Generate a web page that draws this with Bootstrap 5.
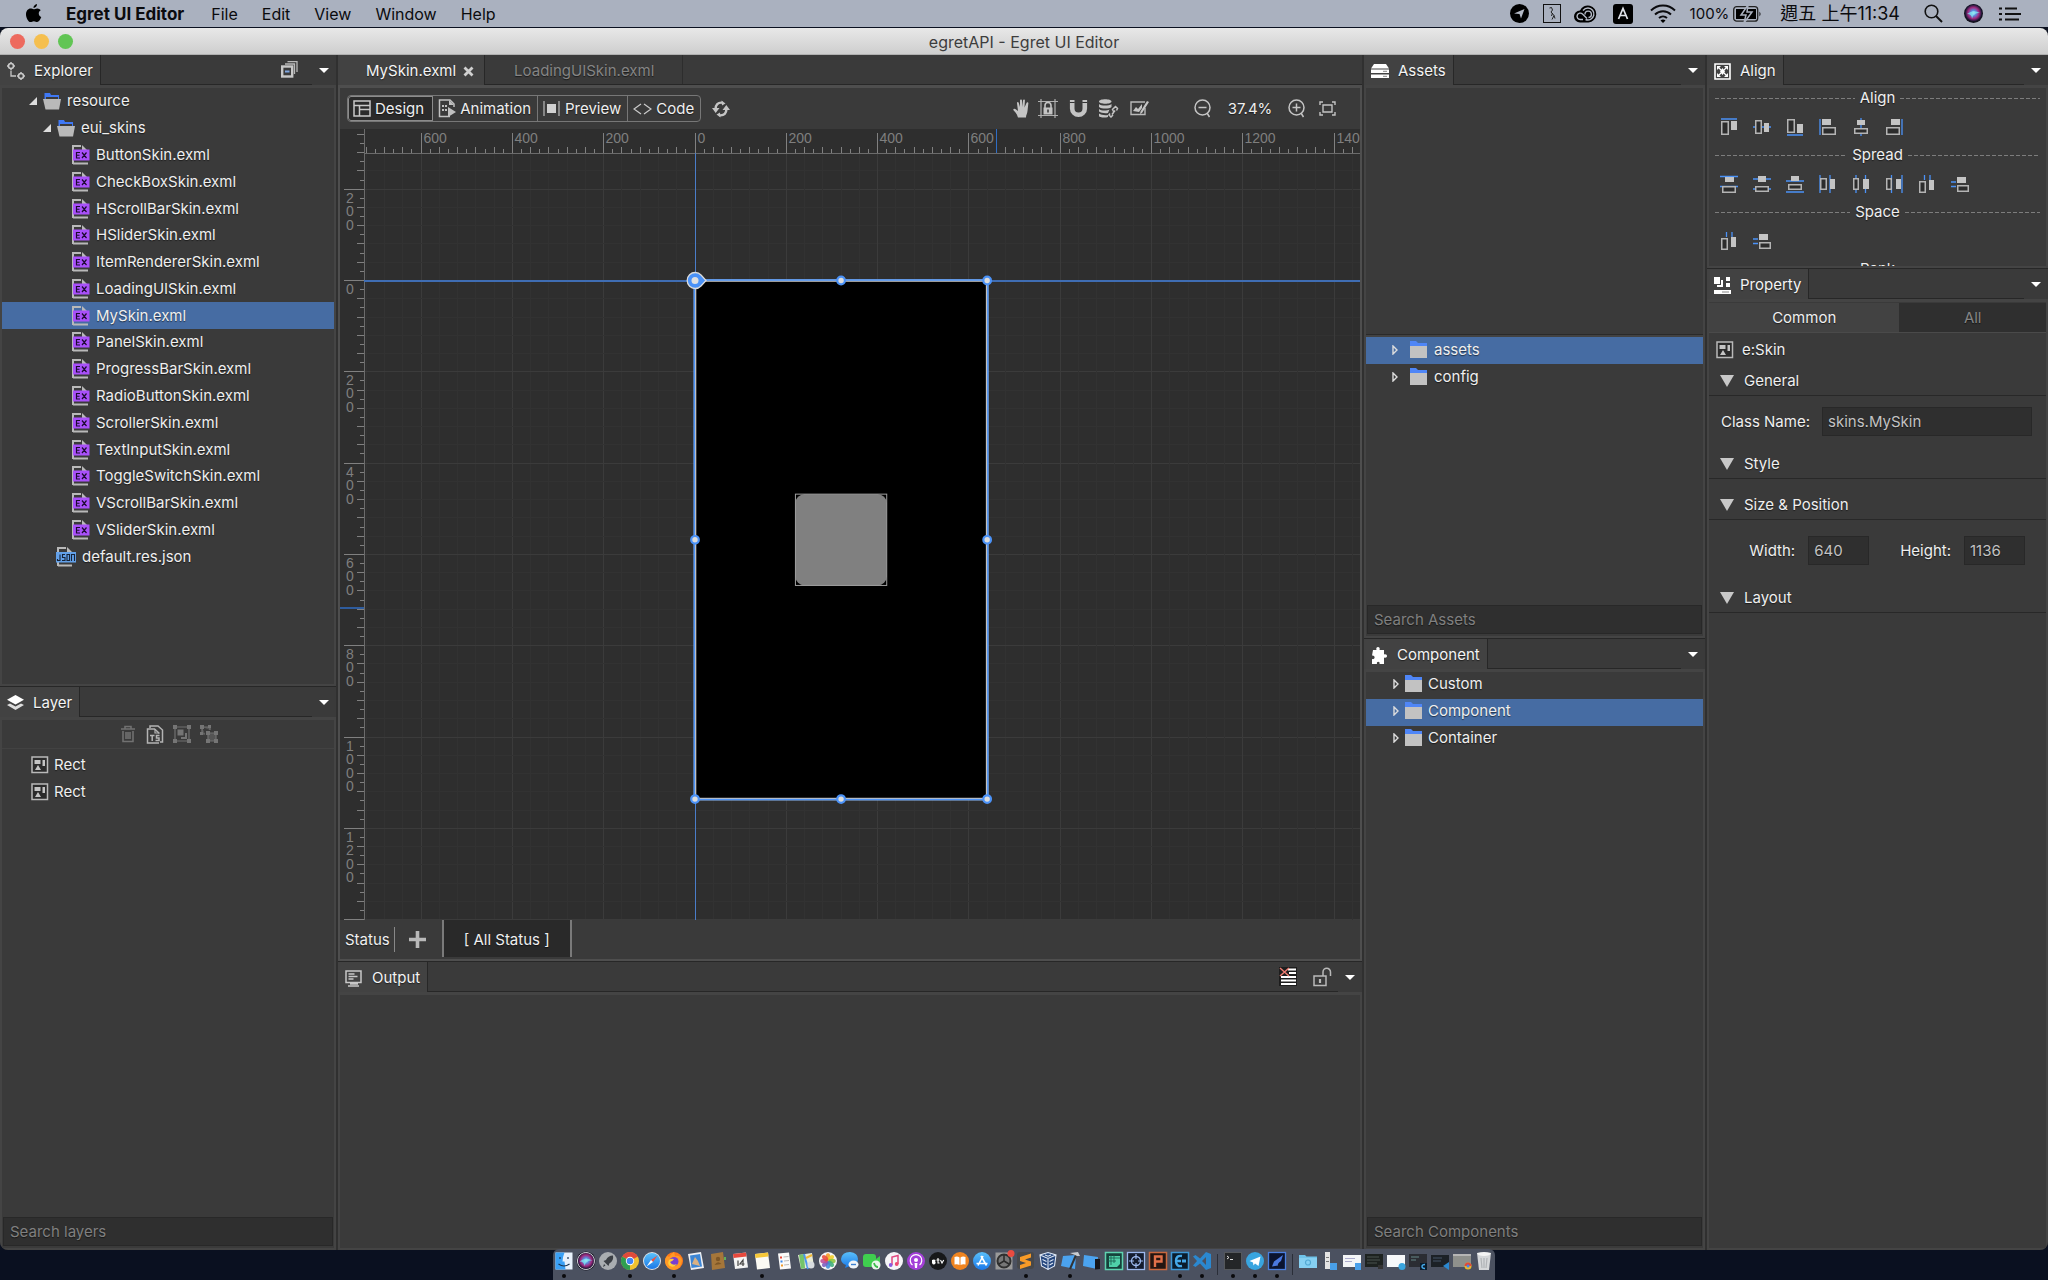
<!DOCTYPE html>
<html lang="en">
<head>
<meta charset="utf-8">
<meta name="viewport" content="width=device-width, initial-scale=1">
<title>egretAPI - Egret UI Editor</title>
<link href="https://cdn.jsdelivr.net/npm/bootstrap@5.3.0/dist/css/bootstrap.min.css" rel="stylesheet">
<script src="https://cdn.jsdelivr.net/npm/bootstrap@5.3.0/dist/js/bootstrap.bundle.min.js"></script>
<style>
  :root { --bg:#3a3a3a; --edge:#444444; --dark:#272727; --field:#2f2f2f; --sel:#466ca3; --ink:#efefef; --icon:#c4c4c4; --blue:#4b92f7; }
  body { font-family: Inter, "Noto Sans CJK TC", sans-serif; font-size:15px; line-height:20px; color:var(--ink); background:#0a1020; overflow:hidden; }
  svg { display:block; flex:none; }
  a { color:inherit; text-decoration:none; }
  button { color:inherit; }
  .menubar { height:27px; background:#aab1bf; color:#0b0b0e; font-size:16px; padding:0 27px 0 25px; margin-bottom:1px; }
  .menubar .appname { font-size:17px; font-weight:700; padding-right:3px; }
  .menubar .clock { font-size:18px; margin-left:18px; }
  .menubar .pct { font-size:15px; }
  .win { margin-bottom:30px; border-radius:8px; overflow:hidden; background:var(--dark); min-height:0; }
  .titlebar { height:27px; padding-top:2px; background:linear-gradient(#e8e8e8,#cecece); border-bottom:1px solid #b0b0b0; color:#3d3d3d; font-size:16px; }
  .lights { gap:9px; left:10px; top:6px; }
  .lights button { width:15px; height:15px; border-radius:50%; border:0; padding:0; }
  .work { display:grid; grid-template-columns:338px minmax(0,1fr) 343px 341px; text-shadow:0 1px 1px rgba(0,0,0,.55); min-height:0; }
  .pane { background:var(--edge); padding:0 2px 2px; min-height:0; border-bottom:1px solid var(--dark); }
  .colm { border-right:2px solid #303030; min-height:0; }
  .colm:last-child { border-right:0; }
  .colm > :last-child { border-bottom:0; }
  .bright { background:#4e4e4e; }
  .phead { height:30px; margin:0 -2px 3px; background:var(--bg); flex:none; }
  .ptab { background:#424242; border:0; padding:2px 7px 0 7px; gap:9px; color:#f4f4f4; text-shadow:inherit; }
  .pfill { border-left:1px solid var(--dark); border-bottom:1px solid var(--dark); }
  .ibtn { border:0; background:none; padding:0; display:flex; align-items:center; justify-content:center; color:var(--icon); text-shadow:inherit; }
  .more { width:24px; padding-top:2px; }
  .pbody { background:var(--bg); min-height:0; }
  .trow { height:27px; white-space:nowrap; }
  .trow.on, .flexrow.on { background:var(--sel); }
  .asset { padding-left:26px; gap:12px; } .asset span { margin-left:-6px; }
  .comprow { padding:0 0 2px 26px; gap:5px; }
  .layerrow { padding-left:29px; gap:5px; }
  .explist { height:482px; }
  .flexrow { flex:1 1 0; white-space:nowrap; min-height:0; }
  .lv0 { padding-left:27px; gap:6px; } .lv1 { padding-left:41px; gap:6px; } .lv2 { padding-left:70px; gap:6px; } .lvj { padding-left:54px; gap:6px; }
  .field { background:var(--field); border:1px solid #282828; color:#c3c3c3; height:29px; padding:0 5px; border-radius:0; font-size:15px; outline:0; min-width:0; text-shadow:inherit; }
  .field::placeholder { color:#808080; opacity:1; }
  .find { margin:0 1px 2px; padding:0 6px; }
  .seg { border:1px solid #777; border-radius:4px; height:27px; }
  .seg button { border:0; border-right:1px solid #777; background:none; gap:4px; padding:0 6px 0 5px; text-shadow:inherit; }
  .seg button:last-child { border-right:0; }
  .seg .active { background:#2a2a2a; outline:1px solid #8c8c8c; outline-offset:-1px; border-radius:3px 0 0 3px; padding-right:8px; }
  .etool { height:41px; padding:0 7px; }
  .tools { gap:11px; padding-right:17px; }
  .doc { border:0; background:none; color:#858585; text-shadow:inherit; padding:2px 28px 0 29px; border-right:1px solid #2d2d2d; }
  .doc.active { background:#424242; color:#f4f4f4; padding:2px 10px 0 28px; gap:7px; border-right:0; }
  .stage { background:#2e2e2e; min-height:0; }
  .stage text { font:14px "Liberation Sans", sans-serif; fill:#7f7f7f; text-shadow:none; }
  .vline { width:1px; height:25px; background:#888; }
  .state { background:#292929; border:0; border-left:2px solid #7a7a7a; border-right:2px solid #7a7a7a; padding:2px 20px 0; color:var(--ink); text-shadow:inherit; }
  .lgd { height:18px; padding:0 6px; gap:5px; }
  .lgd::before, .lgd::after { content:""; flex:1; height:1px; background:repeating-linear-gradient(90deg,#7d7d7d 0 4px,transparent 4px 6px); }
  .icons { height:39px; gap:15px; padding-left:11px; }
  .sect { height:29px; border-bottom:1px solid #282828; padding-left:11px; gap:10px; border-top:0; border-left:0; border-right:0; background:none; text-shadow:inherit; width:100%; }
  .half { border:0; height:29px; text-shadow:inherit; }
  .clsrow { padding:11px 14px 14px 12px; }
  .clsrow label { flex:0 0 101px; white-space:nowrap; }
  .sizerow { padding:16px 21px 19px 0; gap:13px; }
  .num { width:61px; }
  .dock { height:31px; background:#4b5160; border-radius:6px 6px 0 0; bottom:0; left:50%; transform:translateX(-50%); }
  .dock a { width:22px; padding:3px 2px 0; position:relative; }
  .dock .run::after { content:""; position:absolute; left:9px; top:25px; width:4px; height:4px; border-radius:50%; background:#0a0a0c; }
  .dock i { width:9px; padding:5px 4px; } .dock i::before { content:""; display:block; height:21px; background:#2a2e38; }
</style>
</head>
<body class="vh-100 d-flex flex-column position-relative">

<svg width="0" height="0" class="position-absolute" aria-hidden="true">
  <defs>
    <linearGradient id="gb" x2="0" y2="1"><stop stop-color="#5ac0fb"/><stop offset="1" stop-color="#1a78e8"/></linearGradient>
    <radialGradient id="gs"><stop stop-color="#e8f4ff"/><stop offset=".3" stop-color="#5a8fe0"/><stop offset=".65" stop-color="#a02a80"/><stop offset="1" stop-color="#101430"/></radialGradient>
    <g id="siriball"><circle cx="9.500" cy="9.500" r="9.500" fill="#15131f"/><circle cx="9.500" cy="9" r="8.500" fill="url(#gs)"/><path d="M3 10q6-5 13-1-7-1-8 6 0-5-5-5z" fill="#7fe3f0" opacity=".8"/></g>
  </defs>
  <symbol id="more" viewBox="0 0 10 6"><path d="M0 0h10L5 5z" fill="#fff"/></symbol>
  <symbol id="open" viewBox="0 0 8 8"><path d="M8 0v8H0z" fill="#ddd"/></symbol>
  <symbol id="shut" viewBox="0 0 6 10"><path d="M1 1l4 4-4 4z" fill="none" stroke="#ddd" stroke-width="1.4"/></symbol>
  <symbol id="folderopen" viewBox="0 0 18 18"><path d="M1.500 1H7l1 2h8v5h-1V5H3v3H1.500z" fill="#3f78f5"/><path d="M0 7h18l-2 10.500H2.500z" fill="#b9b9b9"/></symbol>
  <symbol id="folder" viewBox="0 0 18 18"><path d="M0 0h6l2 2h9v4H0z" fill="#4f86f7"/><path d="M0 5h17v12H0z" fill="#c2c2c2"/></symbol>
  <symbol id="exml" viewBox="0 0 18 20"><path d="M1 19V1h8M16 18.500H1" fill="none" stroke="#b9b9b9" stroke-width="2"/><path d="M10 0l5 5h-5z" fill="#b9b9b9"/><rect x="1" y="4.500" width="16.500" height="11" fill="#a950fa"/><path d="M8 7.500H4.500v5.500H8M4.500 10.250h3M10 7.500l4.500 5.500M14.500 7.500L10 13" stroke="#1c0a30" stroke-width="1.200" fill="none"/></symbol>
  <symbol id="json" viewBox="0 0 20 20"><path d="M2 19V1h8M16 18.500H2" fill="none" stroke="#b9b9b9" stroke-width="2"/><path d="M11 0l5 5h-5z" fill="#b9b9b9"/><rect y="5" width="20" height="10.500" fill="#62a0e8"/><path d="M4 7.500v6H1.500v-1.500M9 7.500H6.500v3h2.500v3h-3M11 7.500h2.500v6H11zM15.500 14V7.500h3V14" stroke="#152338" stroke-width="1.100" fill="none"/></symbol>
  <symbol id="comp" viewBox="0 0 18 18"><rect x="1" y="1" width="15.500" height="15.500" fill="#2b2b2b" stroke="#b9b9b9" stroke-width="1.500"/><path d="M3.500 4h6v4h-6zM11.500 4H14v6h-2.500zM4 14l3-5 3 5z" fill="#c4c4c4"/></symbol>
  <symbol id="tri" viewBox="0 0 14 12"><path d="M0 0h14L7 12z" fill="#c8c8c8"/></symbol>
</svg>

<nav class="menubar d-flex align-items-center flex-shrink-0" aria-label="System menu">
  <a href="#" aria-label="Apple"><svg width="17" height="19" viewBox="0 0 17 19"><path d="M12 0c.2 1.900-1.700 4-3.500 3.900C8.300 2.200 10 .3 12 0zM8.700 5.200c.9 0 2-.9 3.600-.8 1.400.1 2.600.7 3.400 1.800-2.900 1.700-2.400 5.600.6 6.800-.9 2.500-2.500 5-4.100 5-1.200 0-1.700-.8-3.300-.8s-2.100.8-3.300.8C3.200 18 1 13.700 1 10.400 1 6.700 3.200 4.500 5.500 4.500c1.300 0 2.400.7 3.200.7z"/></svg></a>
  <a href="#" class="appname ms-4">Egret UI Editor</a>
  <a href="#" class="ms-4">File</a><a href="#" class="ms-4">Edit</a><a href="#" class="ms-4">View</a><a href="#" class="ms-4">Window</a><a href="#" class="ms-4">Help</a>
  <div class="ms-auto d-flex align-items-center">
    <svg width="19" height="19" viewBox="0 0 19 19"><circle cx="9.500" cy="9.500" r="9.500"/><path d="M4 9.500L14.500 5 11 14.500 9.500 10z" fill="#b4bac6"/></svg>
    <svg style="margin:0 12px 0 14px" width="18" height="19" viewBox="0 0 18 19"><rect x=".5" y=".5" width="17" height="18" fill="none" stroke="#111"/><path d="M6.500 4l2-.5 1 2.500-1.500 2 3 3.500M9.500 9l-1 3M11 11.500l-2 4M11 11.500l1 3" fill="none" stroke="#222"/></svg>
    <svg width="24" height="18" viewBox="0 0 24 18"><path d="M7 5.500a8.500 8.500 0 1 1 8.500 12H7a6 6 0 0 1 0-12z"/><path d="M14 13.500L9.500 9a3.200 3.200 0 1 0-2.300 5.500H10M10 5.500q2-2.500 5-2.500a6 6 0 1 1-2.500 11.500M12 9.500a3.200 3.200 0 1 1 3.500 3" fill="none" stroke="#b4bac6" stroke-width="1.400"/></svg>
    <svg class="ms-3" width="20" height="20" viewBox="0 0 20 20"><rect width="20" height="20" rx="3"/><path d="M5.500 15L10 4.500 14.500 15M7 11.500h6" fill="none" stroke="#dfe2e8" stroke-width="1.700"/></svg>
    <svg style="margin:0 14px 0 17px" width="26" height="20" viewBox="0 0 26 20"><g fill="none" stroke="#0b0b0e" stroke-width="1.900"><path d="M1 6.500a17 17 0 0 1 24 0M5 10.500a11.500 11.500 0 0 1 16 0M9 14a6 6 0 0 1 8 0"/></g><path d="M10.500 16.500a4 4 0 0 1 5 0L13 19z"/></svg>
    <span class="pct">100%</span>
    <svg class="ms-1" width="29" height="18" viewBox="0 0 29 18"><rect x=".7" y="1.700" width="24" height="14.500" rx="3" fill="none" stroke="#222" stroke-width="1.300"/><path d="M3 4h20v10H3zM26.500 6.500q2 2.500 0 5z"/><path d="M15 0L8 10h5l-2 8 8-11h-5z" stroke="#aab1bf" stroke-width="1.500"/></svg>
    <span class="clock">週五 上午11:34</span>
    <svg class="ms-4" width="20" height="19" viewBox="0 0 20 19"><circle cx="7.500" cy="7.500" r="6.300" fill="none" stroke="#111" stroke-width="1.600"/><path d="M12 12l6 6" stroke="#111" stroke-width="1.900"/></svg>
    <svg style="margin:0 16px 0 20px" width="19" height="19" viewBox="0 0 19 19"><use href="#siriball"/></svg>
    <svg width="22" height="14" viewBox="0 0 22 14"><path d="M0 1.500h3M0 7h3M0 12.500h3M6 1.500h12M6 7h16M6 12.500h14" stroke="#111" stroke-width="2"/></svg>
  </div>
</nav>

<main class="win flex-fill d-flex flex-column">
  <header class="titlebar position-relative d-flex align-items-center justify-content-center flex-shrink-0">
    <div class="lights position-absolute d-flex">
      <button aria-label="Close" style="background:#ed6a5e"></button><button aria-label="Minimize" style="background:#f5bf4f"></button><button aria-label="Zoom" style="background:#61c554"></button>
    </div>
    <span>egretAPI - Egret UI Editor</span>
  </header>

  <div class="work flex-fill">
    <!-- Explorer and layers -->
    <div class="colm d-flex flex-column">
      <section class="pane d-flex flex-column" style="flex:632 1 0">
        <div class="phead d-flex">
          <button class="ptab d-flex align-items-center"><svg width="18" height="18" viewBox="0 0 18 18"><g fill="none" stroke="#c8c8c8" stroke-width="1.600"><circle cx="4" cy="4" r="2.500"/><circle cx="14" cy="14" r="2.500"/><path d="M4 8.500V14h5" stroke-width="1.300"/></g><path d="M4 0v2M4 6v2M0 4h2M6 4h2M14 10v2M14 16v2M10 14h2M16 14h2" stroke="#c8c8c8" stroke-width="1.500"/></svg>Explorer</button>
          <div class="pfill flex-fill d-flex justify-content-end" style="padding-right:14px"><button class="ibtn" aria-label="Collapse all"><svg width="17" height="17" viewBox="0 0 17 17"><path d="M4 3h9.500v10M6.500 .7h9.500V11" fill="none" stroke="#b9b9b9" stroke-width="1.300"/><rect x="1.200" y="5.500" width="10" height="10" fill="none" stroke="#c8c8c8" stroke-width="2.400"/><rect x="4" y="9.500" width="4.500" height="2" fill="#7fa5e0"/></svg></button></div>
          <button class="ibtn more" aria-label="Explorer menu"><svg width="10" height="6"><use href="#more"/></svg></button>
        </div>
        <div class="pbody flex-fill overflow-hidden">
          <div class="explist d-flex flex-column">
            <div class="flexrow lv0 d-flex align-items-center"><svg width="8" height="8"><use href="#open"/></svg><svg width="18" height="18"><use href="#folderopen"/></svg>resource</div>
            <div class="flexrow lv1 d-flex align-items-center"><svg width="8" height="8"><use href="#open"/></svg><svg width="18" height="18"><use href="#folderopen"/></svg>eui_skins</div>
            <div class="flexrow lv2 d-flex align-items-center"><svg width="18" height="20"><use href="#exml"/></svg>ButtonSkin.exml</div>
            <div class="flexrow lv2 d-flex align-items-center"><svg width="18" height="20"><use href="#exml"/></svg>CheckBoxSkin.exml</div>
            <div class="flexrow lv2 d-flex align-items-center"><svg width="18" height="20"><use href="#exml"/></svg>HScrollBarSkin.exml</div>
            <div class="flexrow lv2 d-flex align-items-center"><svg width="18" height="20"><use href="#exml"/></svg>HSliderSkin.exml</div>
            <div class="flexrow lv2 d-flex align-items-center"><svg width="18" height="20"><use href="#exml"/></svg>ItemRendererSkin.exml</div>
            <div class="flexrow lv2 d-flex align-items-center"><svg width="18" height="20"><use href="#exml"/></svg>LoadingUISkin.exml</div>
            <div class="flexrow lv2 d-flex align-items-center on"><svg width="18" height="20"><use href="#exml"/></svg>MySkin.exml</div>
            <div class="flexrow lv2 d-flex align-items-center"><svg width="18" height="20"><use href="#exml"/></svg>PanelSkin.exml</div>
            <div class="flexrow lv2 d-flex align-items-center"><svg width="18" height="20"><use href="#exml"/></svg>ProgressBarSkin.exml</div>
            <div class="flexrow lv2 d-flex align-items-center"><svg width="18" height="20"><use href="#exml"/></svg>RadioButtonSkin.exml</div>
            <div class="flexrow lv2 d-flex align-items-center"><svg width="18" height="20"><use href="#exml"/></svg>ScrollerSkin.exml</div>
            <div class="flexrow lv2 d-flex align-items-center"><svg width="18" height="20"><use href="#exml"/></svg>TextInputSkin.exml</div>
            <div class="flexrow lv2 d-flex align-items-center"><svg width="18" height="20"><use href="#exml"/></svg>ToggleSwitchSkin.exml</div>
            <div class="flexrow lv2 d-flex align-items-center"><svg width="18" height="20"><use href="#exml"/></svg>VScrollBarSkin.exml</div>
            <div class="flexrow lv2 d-flex align-items-center"><svg width="18" height="20"><use href="#exml"/></svg>VSliderSkin.exml</div>
            <div class="flexrow lvj d-flex align-items-center"><svg width="20" height="20"><use href="#json"/></svg>default.res.json</div>
          </div>
        </div>
      </section>
      <section class="pane d-flex flex-column" style="flex:563 1 0">
        <div class="phead d-flex">
          <button class="ptab d-flex align-items-center"><svg width="17" height="16" viewBox="0 0 17 16"><path d="M8.500 0L17 4.700 8.500 9.400 0 4.700z" fill="#fff"/><path d="M0 10l3-1.500 5.500 3 5.500-3 3 1.500-8.500 5z" fill="#ddd"/></svg>Layer</button>
          <div class="pfill flex-fill"></div>
          <button class="ibtn more" aria-label="Layer menu"><svg width="10" height="6"><use href="#more"/></svg></button>
        </div>
        <div class="pbody flex-fill d-flex flex-column">
          <div class="d-flex align-items-center justify-content-center" style="height:29px;gap:9px;border-bottom:1px solid #424242">
            <button class="ibtn" aria-label="Delete"><svg width="18" height="18" viewBox="0 0 18 18" fill="none" stroke="#717171" stroke-width="1.600"><path d="M2 4h14M6 4V1.500h6V4M4 6v10.500h10V6M7 7v7M9 7v7M11 7v7"/></svg></button>
            <button class="ibtn" aria-label="Copy as TypeScript"><svg width="18" height="19" viewBox="0 0 18 19" fill="none" stroke="#b4b4b4" stroke-width="1.500"><path d="M4 3V1h8l4.500 4v12H14M1.500 9V4h7l5 4.500M1.500 8v10H13"/><path d="M9 4v4h4" stroke-width="1.200"/><path d="M4 10.500h4.500M6.200 10.500V16M13.500 10.500h-3v2.500h2.500v2.500H9.500" stroke-width="1.500"/></svg></button>
            <button class="ibtn" aria-label="Group"><svg width="18" height="18" viewBox="0 0 18 18"><path d="M2 2h14v14H2z" fill="none" stroke="#717171" stroke-width="1.200"/><path d="M0 0h4v4H0zM14 0h4v4h-4zM0 14h4v4H0zM14 14h4v4h-4zM4.500 4.500h6v6h-6zM12 8h2v6H8v-2h4z" fill="#757575"/></svg></button>
            <button class="ibtn" aria-label="Ungroup"><svg width="18" height="18" viewBox="0 0 18 18"><path d="M2 2h8v3M2 2v7h3M8 8h8v8H8z" fill="#555" stroke="#717171" stroke-width="1.200"/><path d="M0 0h4v4H0zM8 0h3v3H8zM0 7h3v3H0zM6 6h4v4H6zM14 6h4v4h-4zM6 14h4v4H6zM14 14h4v4h-4z" fill="#757575"/></svg></button>
          </div>
          <div class="flex-fill" style="padding-top:2px">
            <div class="trow layerrow d-flex align-items-center"><svg width="18" height="18"><use href="#comp"/></svg>Rect</div>
            <div class="trow layerrow d-flex align-items-center"><svg width="18" height="18"><use href="#comp"/></svg>Rect</div>
          </div>
          <input class="field find" type="search" placeholder="Search layers" aria-label="Search layers">
        </div>
      </section>
    </div>

    <!-- Editor and output -->
    <div class="colm d-flex flex-column">
      <section class="pane bright d-flex flex-column" style="flex:908 1 0">
        <div class="phead d-flex">
          <button class="doc active d-flex align-items-center">MySkin.exml <svg width="11" height="11" viewBox="0 0 11 11"><path d="M1.500 1.500l8 8M9.500 1.500l-8 8" stroke="#d0d0d0" stroke-width="2.800"/></svg></button>
          <div class="pfill flex-fill d-flex"><button class="doc">LoadingUISkin.exml</button></div>
        </div>
        <div class="pbody flex-fill d-flex flex-column">
          <div class="etool d-flex align-items-center flex-shrink-0">
            <div class="seg d-flex">
              <button class="active d-flex align-items-center"><svg width="18" height="17" viewBox="0 0 18 17" fill="none" stroke="#c8c8c8" stroke-width="1.500"><path d="M1 1h16v15H1zM1 5.500h16M6.500 5.500V16M6.500 9.500H17"/></svg>Design</button>
              <button class="d-flex align-items-center"><svg width="18" height="19" viewBox="0 0 18 19"><path d="M12 17.500H1.500V1H12l4 4v3" fill="none" stroke="#c0c0c0" stroke-width="1.500"/><path d="M11 1l5 5h-5zM4 6h2v2H4zM7 6h2v2H7zM4 10h2v2H4zM7 10h2v2H7zM10 8l8 5-8 5z" fill="#c0c0c0"/></svg>Animation</button>
              <button class="d-flex align-items-center"><svg width="18" height="17" viewBox="0 0 18 17"><path d="M1 1v15M16 1v15" stroke="#b9b9b9" stroke-width="1.200"/><path d="M4 4h9v9H4z" fill="#d0d0d0"/></svg>Preview</button>
              <button class="d-flex align-items-center"><svg width="19" height="12" viewBox="0 0 19 12" fill="none" stroke="#c8c8c8" stroke-width="1.300"><path d="M8 1L1 6l7 5M11 1l7 5-7 5"/></svg>Code</button>
            </div>
            <button class="ibtn" style="margin-left:11px" aria-label="Refresh"><svg width="18" height="18" viewBox="0 0 18 18"><path d="M3.500 9.500q0-7.500 7-6.800M14.500 8.500q0 7.500-7 6.800" fill="none" stroke="#c4c4c4" stroke-width="2.400"/><path d="M0 8h7.500L3.700 13zM10.500 10H18l-3.700-5z" fill="#c4c4c4"/><path d="M9.500 .5l4 3-3.500 2zM8.500 17.500l-4-3 3.500-2z" fill="#c4c4c4"/></svg></button>
            <div class="ms-auto d-flex align-items-center tools">
              <button class="ibtn" style="margin-right:-4px" aria-label="Pan"><svg width="18" height="19" viewBox="0 0 18 19"><path d="M5 18.500Q4.500 16 2.500 13.500L.5 11.300c-.8-1.500 1.200-2 2.200-1l2.300 1.700L4 4.200c-.2-1.500 1.500-1.500 1.800-.2L7 8V1.500c0-1.500 2-1.500 2 0V8l1-6.500c.2-1.300 2-1.200 1.900.3L11.500 8.500 13.500 4c.6-1.300 2.200-.6 1.800.8L14.500 12c-.3 3-1.500 4-1.500 6.500z" fill="#c4c4c4"/></svg></button>
              <button class="ibtn" aria-label="Lock"><svg width="20" height="19" viewBox="0 0 20 19"><path d="M3 0v19M17 0v19M0 2.500h20M0 16.500h20" stroke="#b0b0b0" stroke-width="1.200"/><path d="M7 9V6.500a3 3 0 0 1 6 0V9" fill="none" stroke="#c4c4c4" stroke-width="1.600"/><path d="M5.500 8.500h9v7h-9z" fill="#c4c4c4"/><path d="M10 10.500v3" stroke="#333" stroke-width="1.500"/></svg></button>
              <button class="ibtn" aria-label="Snap"><svg width="19" height="18" viewBox="0 0 19 18"><path d="M3.200 0v8.500a6.300 6.300 0 0 0 12.600 0V0" fill="none" stroke="#c4c4c4" stroke-width="4.600"/><path d="M.7 2.500h5M13.200 2.500h5" stroke="#333" stroke-width="1.200"/></svg></button>
              <button class="ibtn" aria-label="Data link"><svg width="20" height="19" viewBox="0 0 20 19"><path d="M0 2.500C0-.5 12.500-.5 12.500 2.500S0 5.500 0 2.500zM0 5c2 2 10 2 12.500 0v3c-2 2-10 2-12.500 0zM0 10c2 2 8 2 10.500 .5L9 14c-3 .5-7 0-9-1.500zM0 14.500c2 1.500 6 2 9 1.500v2c-3 1-9 .5-9-1z" fill="#c4c4c4"/><path d="M11 14.500l-1 1.500 2 2 2-2M17.500 11.500l1-2-2-2-3 3 1.500 3M13 15.500l3-4" fill="none" stroke="#c4c4c4" stroke-width="1.500"/></svg></button>
              <button class="ibtn" aria-label="Image edit"><svg width="19" height="17" viewBox="0 0 19 17"><path d="M15 8v6.500H1V2h14" fill="none" stroke="#b9b9b9" stroke-width="1.400"/><path d="M3 11l3-4 2 2 4-5v4l-3 4zM17 1l2 1-7 11-2 1 .5-2.500z" fill="#c4c4c4"/></svg></button>
              <button class="ibtn ms-4" style="padding-left:10px" aria-label="Zoom out"><svg width="18" height="19" viewBox="0 0 18 19" fill="none" stroke="#c4c4c4" stroke-width="1.500"><circle cx="8.500" cy="8.500" r="7.500"/><path d="M4.500 8.500h8M13 14l2.500 4" /></svg></button>
              <span class="text-center" style="min-width:54px">37.4%</span>
              <button class="ibtn" aria-label="Zoom in"><svg width="18" height="19" viewBox="0 0 18 19" fill="none" stroke="#c4c4c4" stroke-width="1.500"><circle cx="8.500" cy="8.500" r="7.500"/><path d="M4.500 8.500h8M8.500 4.500v8M13 14l2.500 4"/></svg></button>
              <button class="ibtn" aria-label="Fit" style="padding-left:2px"><svg width="17" height="15" viewBox="0 0 17 15" fill="none" stroke="#c4c4c4" stroke-width="1.400"><path d="M1 4V1h3M13 1h3v3M16 11v3h-3M4 14H1v-3M4 4h9v7H4z"/></svg></button>
            </div>
          </div>
          <div class="stage flex-fill overflow-hidden"><svg id="stage" width="100%" height="100%" role="img" aria-label="Design canvas"></svg></div>
          <div class="d-flex align-items-center flex-shrink-0" style="height:39px;padding-left:5px">
            <span>Status</span><span class="vline ms-1"></span>
            <button class="ibtn" aria-label="Add status" style="margin:0 16px 0 14px"><svg width="17" height="17" viewBox="0 0 17 17"><path d="M8.500 0v17M0 8.500h17" stroke="#b9b9b9" stroke-width="3.600"/></svg></button>
            <button class="state align-self-stretch" style="margin-bottom:2px">[ All Status ]</button>
          </div>
        </div>
      </section>
      <section class="pane d-flex flex-column" style="flex:287 1 0">
        <div class="phead d-flex">
          <button class="ptab d-flex align-items-center"><svg width="18" height="17" viewBox="0 0 18 17" fill="none" stroke="#c8c8c8" stroke-width="1.500"><path d="M1 1h15v11.500H1zM3.500 4h6M3.500 6.500h9M3.500 9h5M5 14h8M3 16h11"/></svg>Output</button>
          <div class="pfill flex-fill d-flex justify-content-end" style="gap:16px;padding-right:6px">
            <button class="ibtn" aria-label="Clear output"><svg width="18" height="19" viewBox="0 0 18 19"><path d="M0 0h18v19H0z" fill="#1d1d1d"/><path d="M9 2.500h8M10 6h7M2 10h15M2 13.500h15M2 17h15" stroke="#fff" stroke-width="2.200"/><path d="M1 1l9 8M10 1L1 9" stroke="#ee7d72" stroke-width="1.500"/></svg></button>
            <button class="ibtn" aria-label="Scroll lock"><svg width="19" height="20" viewBox="0 0 19 20" fill="none" stroke="#b9b9b9" stroke-width="1.500"><path d="M1 9h12v9.500H1zM10 9V5a3.500 3.500 0 0 1 7.500 0v4"/><path d="M7 12v4" stroke-width="2.200"/></svg></button>
          </div>
          <button class="ibtn more" aria-label="Output menu"><svg width="10" height="6"><use href="#more"/></svg></button>
        </div>
        <div class="pbody flex-fill"></div>
      </section>
    </div>

    <!-- Assets and components -->
    <div class="colm d-flex flex-column">
      <section class="pane d-flex flex-column" style="flex:583 1 0">
        <div class="phead d-flex">
          <button class="ptab d-flex align-items-center"><svg width="18" height="15" viewBox="0 0 18 15"><path d="M3 0h12l3 4.500H0zM0 5.500h18V9H0zM0 10.500h18V14H0z" fill="#fff"/><path d="M12 7.300h4M12 12.300h4" stroke="#888"/></svg>Assets</button>
          <div class="pfill flex-fill"></div>
          <button class="ibtn more" aria-label="Assets menu"><svg width="10" height="6"><use href="#more"/></svg></button>
        </div>
        <div class="pbody flex-fill d-flex flex-column">
          <div style="flex:247 1 0;border-bottom:1px solid #2a2a2a"></div>
          <div style="flex:269 1 0;border-top:2px solid #424242">
            <div class="trow asset on d-flex align-items-center"><svg width="6" height="10"><use href="#shut"/></svg><svg width="18" height="18"><use href="#folder"/></svg><span>assets</span></div>
            <div class="trow asset d-flex align-items-center"><svg width="6" height="10"><use href="#shut"/></svg><svg width="18" height="18"><use href="#folder"/></svg><span>config</span></div>
          </div>
          <input class="field find" type="search" placeholder="Search Assets" aria-label="Search Assets">
        </div>
      </section>
      <section class="pane d-flex flex-column" style="flex:612 1 0">
        <div class="phead d-flex">
          <button class="ptab d-flex align-items-center"><svg width="17" height="18" viewBox="0 0 17 18"><path d="M2 4h3.500C4 0 10 0 8.500 4H13v4.500c4-1.500 4 4.500 0 3V18H8.500c1-3-3.500-3-2.500 0H1v-5c3.500 1 3.500-4 0-3.500z" fill="#fff"/></svg>Component</button>
          <div class="pfill flex-fill"></div>
          <button class="ibtn more" aria-label="Component menu"><svg width="10" height="6"><use href="#more"/></svg></button>
        </div>
        <div class="pbody flex-fill d-flex flex-column">
          <div class="flex-fill">
            <div class="trow comprow d-flex align-items-center"><svg width="8" height="10"><use href="#shut"/></svg><svg width="18" height="18"><use href="#folder"/></svg>Custom</div>
            <div class="trow comprow on d-flex align-items-center"><svg width="8" height="10"><use href="#shut"/></svg><svg width="18" height="18"><use href="#folder"/></svg>Component</div>
            <div class="trow comprow d-flex align-items-center"><svg width="8" height="10"><use href="#shut"/></svg><svg width="18" height="18"><use href="#folder"/></svg>Container</div>
          </div>
          <input class="field find" type="search" placeholder="Search Components" aria-label="Search Components">
        </div>
      </section>
    </div>

    <!-- Align and property -->
    <div class="colm d-flex flex-column">
      <section class="pane d-flex flex-column flex-shrink-0" style="height:214px">
        <div class="phead d-flex">
          <button class="ptab d-flex align-items-center"><svg width="17" height="17" viewBox="0 0 17 17"><path d="M1 1h15v15H1z" fill="none" stroke="#fff" stroke-width="1.600"/><path d="M3 3h4L3 7zM14 3h-4l4 4zM3 14h4l-4-4zM14 14h-4l4-4zM8.500 5L11 8.500 8.500 12 6 8.500z" fill="#fff"/><path d="M4 4l9 9M13 4l-9 9" stroke="#fff" stroke-width="1.200"/></svg>Align</button>
          <div class="pfill flex-fill"></div>
          <button class="ibtn more" aria-label="Align menu"><svg width="10" height="6"><use href="#more"/></svg></button>
        </div>
        <div class="pbody flex-fill overflow-hidden" style="padding-top:1px">
          <div class="lgd d-flex align-items-center">Align</div>
          <div class="icons d-flex align-items-center" data-set="t m b l c r"></div>
          <div class="lgd d-flex align-items-center">Spread</div>
          <div class="icons d-flex align-items-center" data-set="st sm sb sl sc sr ph pv"></div>
          <div class="lgd d-flex align-items-center">Space</div>
          <div class="icons d-flex align-items-center" data-set="ph pv"></div>
          <div class="lgd d-flex align-items-center">Rank</div>
        </div>
      </section>
      <section class="pane d-flex flex-column flex-fill">
        <div class="phead d-flex">
          <button class="ptab d-flex align-items-center"><svg width="17" height="17" viewBox="0 0 17 17"><path d="M0 0h6v7H0zM7 3h2v7H3V8h4zM12 0h4v4h-4zM12 6h4v4h-4zM0 13h17v4H0z" fill="#fff"/><path d="M8 15h7" stroke="#888"/></svg>Property</button>
          <div class="pfill flex-fill"></div>
          <button class="ibtn more" aria-label="Property menu"><svg width="10" height="6"><use href="#more"/></svg></button>
        </div>
        <div class="pbody flex-fill" style="padding-top:1px">
          <div class="d-flex" style="border-bottom:1px solid #4a4a4a"><button class="half" style="flex:57 1 0;background:#424242">Common</button><button class="half" style="flex:43 1 0;background:var(--field);color:#858585">All</button></div>
          <div class="d-flex align-items-center" style="height:34px;padding-left:7px;gap:8px"><svg width="18" height="18"><use href="#comp"/></svg>e:Skin</div>
          <button class="sect d-flex align-items-center"><svg width="14" height="12"><use href="#tri"/></svg>General</button>
          <div class="clsrow d-flex align-items-center"><label for="cls">Class Name:</label><input id="cls" class="field flex-fill" value="skins.MySkin"></div>
          <button class="sect d-flex align-items-center"><svg width="14" height="12"><use href="#tri"/></svg>Style</button>
          <button class="sect d-flex align-items-center" style="margin-top:12px"><svg width="14" height="12"><use href="#tri"/></svg>Size &amp; Position</button>
          <div class="sizerow d-flex align-items-center justify-content-end"><label for="wd">Width:</label><input id="wd" class="field num" value="640"><label for="ht" style="margin-left:18px">Height:</label><input id="ht" class="field num" value="1136"></div>
          <button class="sect d-flex align-items-center"><svg width="14" height="12"><use href="#tri"/></svg>Layout</button>
        </div>
      </section>
    </div>
  </div>
</main>

<nav class="dock position-absolute d-flex" id="dock" aria-label="Dock"></nav>

<script>
// Alignment glyphs: outlined box, filled box and blue guide lines on an 18px grid
const box = (x,y,w,h) => `<rect x="${x+.75}" y="${y+.75}" width="${w-1.5}" height="${h-1.5}" fill="#2c2c2c" stroke="#b4b4b4" stroke-width="1.5"/>`;
const fil = (x,y,w,h) => `<rect x="${x}" y="${y}" width="${w}" height="${h}" fill="#c4c4c4"/>`;
const ln = d => `<path d="${d}" stroke="#4b92f7" stroke-width="1.3" fill="none"/>`;
const glyph = {
  t: ln('M1 1h16')+box(1,3,8,14)+fil(11,3,6,9),
  m: ln('M0 9h18')+box(2,2,7,14)+fil(11,5,5,9),
  b: box(1,1,8,14)+fil(11,6,6,9)+ln('M1 17h16'),
  l: ln('M1 1v16')+fil(3,1,9,6)+box(3,9,14,8),
  c: ln('M9 0v18')+fil(5,2,8,5)+box(2,10,14,6),
  r: ln('M17 1v16')+fil(6,1,9,6)+box(1,9,14,8),
  st: ln('M0 1.5h18M0 11.500h18')+fil(5,2,9,5)+box(2,11,14,7),
  sm: ln('M0 4h18M0 14h18')+fil(5,1,8,6)+box(2,11,14,6),
  sb: ln('M0 6h18M0 17h18')+fil(5,1,8,5)+box(2,9,14,6),
  sl: ln('M1 0v18M11 0v18')+box(1,3,7,12)+fil(11,4,5,10),
  sc: ln('M4 0v18M13.500 0v18')+box(1,3,6,12)+fil(11,4,6,10),
  sr: ln('M6.500 0v18M17 0v18')+box(1,3,6,12)+fil(11,4,5,10),
  ph: ln('M6.500 0v5M12 0v5')+box(1,6,7,12)+fil(11,5,5,10),
  pv: ln('M0 7h5M0 11.500h5')+fil(6,2,9,6)+box(6,10,12,7)
};
document.querySelectorAll('[data-set]').forEach(row => {
  row.innerHTML = row.dataset.set.split(' ').map(k => `<button class="ibtn" aria-label="${k}"><svg width="18" height="18">${glyph[k]}</svg></button>`).join('');
});

// Rulers, grid, page and selection handles
const K = 91.3 / 200, RX = 24, RY = 24, OX = 355, OY = 151.5;
function drawStage() {
  const el = document.getElementById('stage'), W = el.parentNode.clientWidth, H = el.parentNode.clientHeight;
  let g = '', r = '';
  const seg = (x1,y1,x2,y2,c,w=1) => `<path d="M${x1} ${y1}L${x2} ${y2}" stroke="${c}" stroke-width="${w}"/>`;
  for (let u = -800; u < 1600; u += 20) {
    const x = Math.floor(OX + u*K) + .5, y = Math.floor(OY + u*K) + .5, major = u % 200 === 0, mid = u % 40 === 0;
    if (x > RX && x < W) {
      if (mid) g += seg(x, RY, x, H, major ? '#3b3b3b' : '#323232');
      r += seg(x, major ? 4 : mid ? 18 : 20, x, RY, '#808080');
      if (major) r += `<text x="${x+2}" y="14">${Math.abs(u)}</text>`;
    }
    if (y > 2 && y < H) {
      if (mid && y > RY) g += seg(RX, y, W, y, major ? '#3b3b3b' : '#323232');
      r += seg(major ? 4 : mid ? 17 : 20, y, RX, y, '#808080');
      if (major && y > RY && y + 20 < H) [...String(Math.abs(u))].forEach((d,i) => { r += `<text x="10" y="${y+13+i*13.5}" text-anchor="middle">${d}</text>`; });
    }
  }
  r += seg(RX, RY+.5, W, RY+.5, '#6b6b6b') + seg(RX+.5, 0, RX+.5, H, '#6b6b6b');
  r += seg(656.5, 0, 656.5, RY, '#2f6dc4') + seg(0, 479, RX, 479, '#2f6dc4', 1.5);
  const x2 = OX + 640*K, y2 = OY + 1136*K, xm = (OX+x2)/2, ym = (OY+y2)/2, q = 200*K;
  let p = seg(RX, OY+.5, W, OY+.5, '#3f6db3', 2) + seg(OX+.5, RY, OX+.5, H, '#4a7dc9');
  p += `<rect x="${OX}" y="${OY}" width="${x2-OX}" height="${y2-OY}" fill="#000" stroke="#c3c3c3" stroke-width="2.600"/>`;
  p += `<rect x="${OX-.7}" y="${OY-.5}" width="${x2-OX+1.4}" height="${y2-OY+1}" fill="none" stroke="#4b92f7" stroke-width="1.500"/>`;
  p += `<rect x="${xm-q/2}" y="${ym-q/2}" width="${q}" height="${q}" rx="9" fill="#808080"/><rect x="${xm-q/2}" y="${ym-q/2}" width="${q}" height="${q}" fill="none" stroke="#a0a0a0"/>`;
  [[xm,OY],[x2,OY],[OX,ym],[x2,ym],[OX,y2],[xm,y2],[x2,y2]].forEach(([x,y]) => { p += `<circle cx="${x}" cy="${y}" r="3.800" fill="#dcdcdc" stroke="#4b92f7" stroke-width="2.200"/>`; });
  p += `<path d="M${OX+11} ${OY}l-5 5.500a8 8 0 1 1 0-11z" fill="#4b92f7" stroke="#dcdcdc" stroke-width="1.300"/><circle cx="${OX}" cy="${OY}" r="3.500" fill="#e0e0e0"/>`;
  el.innerHTML = g + r + p;
}
drawStage(); addEventListener('resize', drawStage);

// Dock: [name, running, drawing]
const C = (f,e='') => `<circle cx="9" cy="9" r="9" fill="${f}"/>${e}`;
const R = (f,e='',s='') => `<rect x=".5" y=".5" width="17" height="17" fill="${f}" ${s}/>${e}`;
const P = (d,f) => `<path d="${d}" fill="${f}"/>`;
const L = (d,s,w=1.2) => `<path d="${d}" fill="none" stroke="${s}" stroke-width="${w}"/>`;
const apps = [
 ['Finder',1, R('#e8f1fb',P('M.5.5h9q-2 5-2 9h2l1 8H.500z','#3aa0f5')+L('M5 5v2M13 5v2M3.500 12q5.500 4 11 0','#1a3350'))],
 ['Siri',0,'<use href="#siriball" transform="translate(-.5 -.5)"/>'+L('M9 .5a8.500 8.500 0 1 1-.1 0','#cfcfd6',1)],
 ['Launchpad',0,C('#a9adb1',P('M14 3.500q-5 0-7 4.500L4.500 9l5 5 .8-2.500Q15 9 14 3.500zM5 12l1.500 1.500L4 15z','#3b3f45'))],
 ['Chrome',1,C('#f2c230',P('M9 9L1.200 4.500A9 9 0 0 1 16.800 4.500z','#df4a3b')+P('M9 9L1.200 4.500A9 9 0 0 0 9 18z','#2f9e50')+'<circle cx="9" cy="9" r="4.200" fill="#fff"/><circle cx="9" cy="9" r="3.300" fill="#4285f4"/>')],
 ['Safari',0,C('#dfe3e8','<circle cx="9" cy="9" r="8" fill="url(#gb)"/>'+P('M14.500 3.500L10 10 8 8z','#f0503c')+P('M3.500 14.500L8 8l2 2z','#fff'))],
 ['Firefox',1,C('#ff7a1a',P('M2 4l2 1q3-4 5-5l1 4q5-1 7 4-1 9-8 10Q1 17 0 10q0-4 2-6z','#ff9a26')+'<circle cx="9" cy="9.500" r="4.500" fill="#7a3fd0"/>'+P('M4 8q2-2 5-1-1 2-4 3 2 4 7 2-3 4-7 2-3-2-1-6z','#ffcf3a'))],
 ['Mail',0,P('M1 2l13-2 3 16-13 2z','#eef0f4')+P('M3 3.500L13 2l2 12.500-10.500 1.500z','#3d86d6')+P('M5 12l3-7 3 4 2 5z','#d9b184')],
 ['Contacts',0,P('M2 2L14 0l2 16-13 2z','#a5763a')+'<circle cx="9" cy="7" r="2.200" fill="#7d5626"/>'+P('M5.500 13q3-5 7-1z','#7d5626')+P('M15 5h2v3h-2z','#5fae5a')],
 ['Calendar',0,P('M2 2l13-1.500 2 15-13 1.500z','#f4f4f4')+P('M2 2l13-1.500.5 4L2.500 6z','#e5483d')+L('M7 8.500v5.500M12 14V8l-3 4h4.500','#444')],
 ['Notes',1,P('M2 2l13-1.500 2 15.500-13 1.500z','#fbfaf4')+P('M2 2l13-1.500.5 4L2.500 6z','#f6c737')],
 ['Reminders',0,P('M3 1.500L14 .5l2 16-11 1z','#fafafa')+L('M8.500 5l5-.5M9 9l5-.5M9 13l5-.5','#bbb')+P('M5 4.500h2v2H5z','#e84b3c')+P('M5.500 8.500h2v2h-2z','#3a87e8')+P('M6 12.500h2v2H6z','#f09a2a')],
 ['Maps',0,P('M1 3l14-2 2 14-13 2z','#e9ecd9')+P('M2 3l5-1 1 14-4 1z','#74c46a')+L('M7 2l4 15','#4d96ea',2)+L('M9 6l6-3','#f2b632',2)+'<circle cx="14" cy="13" r="3.500" fill="#d8dce0"/>'],
 ['Photos',0,C('#f5f5f5',[...Array(8)].map((_,i)=>`<ellipse cx="9" cy="5" rx="2.300" ry="3.700" fill="${['#f59a23','#f2cf2a','#8cc63e','#3eaf7a','#3f8ed8','#7a5fc0','#c04f9a','#e84b3c'][i]}" opacity=".88" transform="rotate(${i*45} 9 9)"/>`).join(''))],
 ['Messages',0,P('M0 7q1-7 9-7 8 1 8 7 0 6-8 7l-5 2 1-3q-5-2-5-6z','url(#gb)')+'<ellipse cx="12.500" cy="12.500" rx="5" ry="4" fill="#f0f4f8"/>'+L('M10 12.500h5','#3b7fd0',1.4)],
 ['FaceTime',0,'<rect y="2" width="13" height="13" rx="3" fill="#3fcf4f"/>'+P('M13 7l4-3v9l-4-3z','#3fcf4f')+'<circle cx="13" cy="13" r="4.500" fill="#e9f6ea"/>'+L('M11 11q1 4 4 4','#3dbb4c',1.8)],
 ['Music',0,C('#f5f5f8',L('M7 13V5l6-1.500V12','#e2487f',1.5)+'<circle cx="5.700" cy="13" r="1.900" fill="#8a5ae0"/><circle cx="11.700" cy="12" r="1.900" fill="#ef4a70"/>')],
 ['Podcasts',0,C('#a33fd8',L('M5.500 13a5.800 5.800 0 1 1 7 0','#fff')+'<circle cx="9" cy="8" r="2" fill="#fff"/>'+P('M7.500 11h3l-.5 5H8z','#fff'))],
 ['TV',0,C('#17181a',P('M3 8q2-1 3.500 0-.8 1.500.3 3Q4.500 14 3 11z','#fff')+L('M9 6v5h1.500M7.500 8h3M11.500 8l1.500 3 1.700-3','#fff',1.1))],
 ['Books',0,C('#ef8420',P('M3.500 5q3-1 5 .5V13q-2-1-5-.5zM14.500 5q-3-1-5 .5V13q2-1 5-.5z','#fff'))],
 ['App Store',0,C('url(#gb)',L('M5 13.500l5-9.500M8 4l5.500 9.500M3.500 11.500h11','#fff',1.6))],
 ['Settings',0,R('#9a9a9a','<circle cx="9" cy="9" r="6.500" fill="#777" stroke="#303030" stroke-width="2"/>'+L('M9 9V3M9 9l5 3M9 9l-5 3','#2a2a2a',1.5)+'<circle cx="16" cy="1.500" r="3.500" fill="#ea4b40"/>')],
 ['Sublime',1,'<rect width="17" height="17" rx="3" fill="#47484a"/>'+P('M3 5l11-3.500v4L8 7.500l6 2v4L3 17v-4l6-2-6-2z','#f79a27')],
 ['VirtualBox',0,P('M9 0l8 3-1.500 11L9 18l-6.500-4L1 3z','#27487f')+L('M1 3l8 3.500L17 3M9 6.500V18M1 3l1.500 11L9 17.500l6.500-3.500L17 3 9 .5z','#dfe8f5',1.1)+L('M3.500 7.500l4 2M4 11l3.500 2M14.500 7.500l-4 2M14 11l-3.500 2M6 3l3 1.200L12 3','#dfe8f5',1.1)],
 ['Xcode',1,P('M2 4l13-1-1 14-14-3z','#4ba3f0')+L('M15 3L9 17','#333',2)+P('M9 1l8-1 2 4-3 0-2-1z','#c9ccd0')],
 ['Simulator',0,P('M1 3l14 2-1 12L0 14z','#4ba3f0')+P('M12 7h5v10l-5 .5z','#15161a')],
 ['Texture Merger',0,R('#16413b',P('M4 4h11v8l-3 3H4z','#4fd0a8')+L('M6 3v10M9 3v8M3 6h12M3 9h8','#1a5a4c',.8),'stroke="#5fd3b0" stroke-width="1.500"')],
 ['Feather',0,R('#141c2e','<circle cx="9" cy="9" r="4.500" fill="none" stroke="#9db9ee" stroke-width="1.300"/>'+L('M9 2v5M9 11v5M2 9h5M11 9h5','#9db9ee'),'stroke="#9db9ee" stroke-width="1.300"')],
 ['Res Depot',0,R('#241612',L('M6 15V4.500h6.500v5H6','#e2714a',2.4),'stroke="#c9683f" stroke-width="1.500"')],
 ['Egret UI Editor',1,R('#0a1c2c',L('M11 4q-6-1-6 5t6 5M5 9h5','#45a8e8',2.4)+P('M11 7.500h4v3h-4z','#45a8e8'),'stroke="#3d96d4" stroke-width="1.500"')],
 ['VS Code',1,`<path fill-rule="evenodd" d="M13 0l5 2v14l-5 2-6-6.500L2.500 15 0 13.500 4 9 0 4.500 2.500 3 7 6.500zM13 5L9 9l4 4z" fill="#2b88d0"/>`],
 null,
 ['Terminal',1,R('#242628',L('M3 4l2 1.500L3 7M6 7.500h3','#ddd',1),'stroke="#55585c"')],
 ['Telegram',1,C('#39a5e0',P('M3.500 9L14.500 4.500 12.500 14 9 11.500 7.500 13.500 7 10.500z','#fff'))],
 ['Launcher',1,R('#0b1430',P('M15 3L6 9.500 4 14.500l6-1q-1-2 3-4.500zM3 15l3-3','#4a78e0'),'stroke="#4a7fe0" stroke-width="1.300"')],
 null,
 ['Downloads',0,P('M0 3h6l1.500 1.500H18V16H0z','#6fc3ea')+P('M0 6h18v10H0z','#86d0f2')+'<circle cx="9" cy="10.500" r="2.500" fill="none" stroke="#53a9d3" stroke-width="1.200"/>'],
 ['Window 1',0,P('M4 0h5v17H4z','#e4e4e4')+P('M5 5h3v1H5zM5 9h3v1H5z','#777')+P('M9 11h7v7H9z','#49a0ea')],
 ['Window 2',0,P('M0 3h18v12H0z','#f2f4f6')+P('M2 6h10v1H2zM2 9h7v1H2z','#aac')+P('M12 11h6v7h-6z','#49a0ea')],
 ['Window 3',0,P('M0 2h18v13H0z','#1d2220')+L('M2 5h12M2 8h13M2 11h10','#55605a',.8)+P('M13 13h5v4h-5z','#333')],
 ['Window 4',0,P('M0 3h18v12H0z','#f6f8fa')+'<circle cx="15" cy="14.500" r="3.500" fill="#39a5e0"/>'],
 ['Window 5',0,P('M0 2h18v13H0z','#2b2d33')+L('M2 5h8M2 8h5','#688')+P('M11 11h7v7h-7z','#0a1c2c')+L('M16 12.500q-3 0-3 2t3 2','#45a8e8',1.4)],
 ['Window 6',0,P('M0 3h18v12H0z','#1c2126')+L('M2 6h9M2 9h8','#456')+P('M12 14l6-4v8z','#2b88d0')],
 ['Window 7',0,P('M0 2h18v13H0z','#8e908c')+P('M0 2h18v2H0z','#b5b5b5')+'<circle cx="15" cy="14" r="3.500" fill="#e8b52f"/><path d="M11.500 14a3.500 3.500 0 0 1 7 0z" fill="#df4a3b"/><circle cx="15" cy="14" r="1.500" fill="#4285f4"/>'],
 ['Trash',0,P('M2 1h14l-2 17H4z','#d5d7d9')+P('M2 1q7-2 14 0-1 3-7 3T2 1z','#f4f4f4')+L('M6 6l1 10M12 6l-1 10M9 6v10','#b0b3b6')]
];
document.getElementById('dock').innerHTML = apps.map(a => a ? `<a href="#" aria-label="${a[0]}" class="${a[1]?'run':''}"><svg width="18" height="18" overflow="visible">${a[2]}</svg></a>` : '<i></i>').join('');
</script>
</body>
</html>
